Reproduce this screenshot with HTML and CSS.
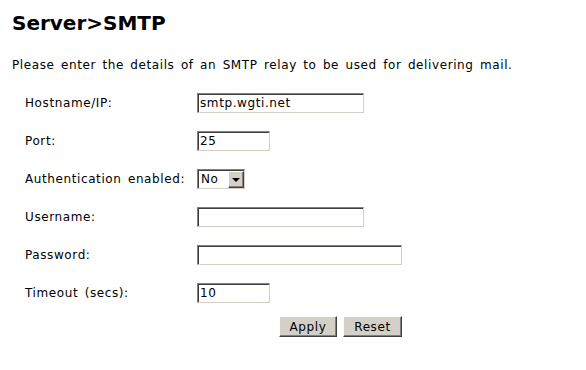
FILE: index.html
```html
<!DOCTYPE html>
<html lang="en">
<head>
    <meta charset="UTF-8">
    <title>Server&gt;SMTP</title>
    <link rel="stylesheet" href="styles.css">
</head>
<body>

    <h1>Server&gt;SMTP</h1>
    <p class="intro">Please enter the details of an SMTP relay to be used for delivering mail.</p>

    <!-- SMTP relay form -->
    <form class="smtp-form">
        <div class="row">
            <label for="host">Hostname/IP:</label>
            <input type="text" id="host" class="field wide" value="smtp.wgti.net">
        </div>
        <div class="row">
            <label for="port">Port:</label>
            <input type="text" id="port" class="field short" value="25">
        </div>
        <div class="row">
            <label for="auth">Authentication enabled:</label>
            <span class="select-box">
                <select id="auth">
                    <option>No</option>
                    <option>Yes</option>
                </select>
                <span class="select-arrow"></span>
            </span>
        </div>
        <div class="row">
            <label for="user">Username:</label>
            <input type="text" id="user" class="field wide">
        </div>
        <div class="row">
            <label for="pass">Password:</label>
            <input type="password" id="pass" class="field wider">
        </div>
        <div class="row">
            <label for="timeout">Timeout (secs):</label>
            <input type="text" id="timeout" class="field short" value="10">
        </div>
        <div class="buttons">
            <button type="button" class="btn">Apply</button>
            <button type="reset" class="btn">Reset</button>
        </div>
    </form>

</body>
</html>
```

FILE: styles.css
```css
* {
    margin: 0;
    padding: 0;
    box-sizing: border-box;
    font-family: "DejaVu Sans", Verdana, sans-serif;
}

body {
    background: #ffffff;
    color: #000000;
    font-size: 12px;
    letter-spacing: 0.6px;
    word-spacing: 2px;
    padding: 11px 12px 0 12px;
}

h1 {
    font-size: 20px;
    line-height: 24px;
    font-weight: bold;
    letter-spacing: 0;
    word-spacing: 0;
}

.intro {
    margin-top: 23px;
    line-height: 15px;
}

/* Form */
.smtp-form {
    margin-top: 11px;
    margin-left: 13px;
    width: 377px;
}

.row {
    display: flex;
    align-items: center;
    height: 38px;
}

.row label {
    width: 172px;
    flex-shrink: 0;
}

.field {
    height: 20px;
    padding: 0 2px;
    font-size: 12px;
    letter-spacing: 0.6px;
    background: #ffffff;
    border-top: 1px solid #808080;
    border-left: 1px solid #808080;
    border-right: 1px solid #d4d0c8;
    border-bottom: 1px solid #d4d0c8;
    box-shadow: inset 1px 1px 0 #404040;
    outline: none;
}

.wide {
    width: 167px;
}

.wider {
    width: 205px;
}

.short {
    width: 73px;
}

/* Select box */
.select-box {
    position: relative;
    display: inline-block;
    width: 48px;
    height: 20px;
    border-top: 1px solid #808080;
    border-left: 1px solid #808080;
    border-right: 1px solid #d4d0c8;
    border-bottom: 1px solid #d4d0c8;
    box-shadow: inset 1px 1px 0 #404040;
    background: #ffffff;
}

.select-box select {
    appearance: none;
    -webkit-appearance: none;
    border: none;
    background: transparent;
    font-size: 12px;
    letter-spacing: 0.6px;
    width: 100%;
    height: 100%;
    padding: 0 0 0 3px;
    outline: none;
}

.select-arrow {
    position: absolute;
    top: 1px;
    right: 0;
    width: 16px;
    height: 17px;
    background: #d4d0c8;
    border-top: 1px solid #ffffff;
    border-left: 1px solid #ffffff;
    border-right: 1px solid #404040;
    border-bottom: 1px solid #404040;
    box-shadow: inset -1px -1px 0 #808080;
    pointer-events: none;
}

.select-arrow::after {
    content: "";
    position: absolute;
    left: 3px;
    top: 6px;
    border-left: 4px solid transparent;
    border-right: 4px solid transparent;
    border-top: 4px solid #000000;
}

/* Buttons */
.buttons {
    display: flex;
    justify-content: flex-end;
    gap: 6px;
    margin-top: 4px;
}

.btn {
    height: 21px;
    padding: 0 5px;
    font-size: 12px;
    letter-spacing: 0.6px;
    background: #d4d0c8;
    border-top: 1px solid #ffffff;
    border-left: 1px solid #ffffff;
    border-right: 1px solid #404040;
    border-bottom: 1px solid #404040;
    box-shadow: inset -1px -1px 0 #808080;
}

.btn:first-child {
    width: 58px;
}

.btn:last-child {
    width: 59px;
}
```
